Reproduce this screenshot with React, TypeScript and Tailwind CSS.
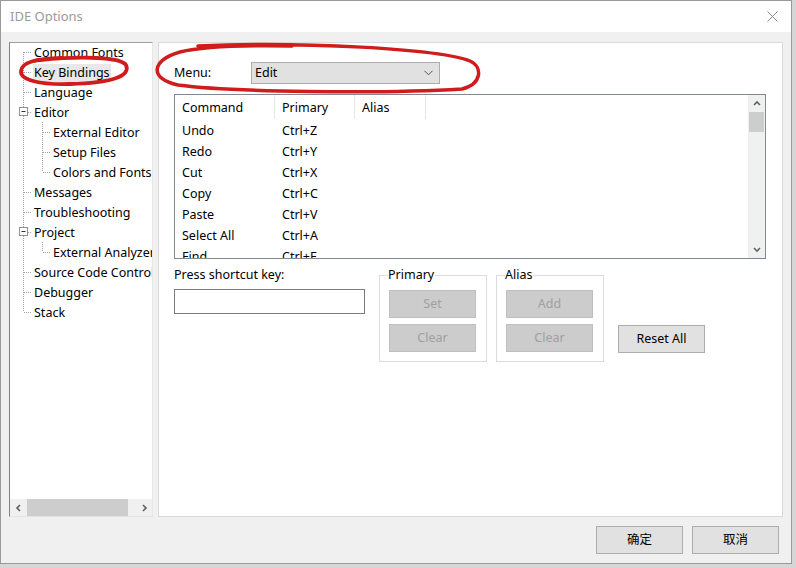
import React from "react";

const FONT = { fontFamily: '"Noto Sans", "Noto Sans CJK SC", sans-serif' };

type Node = { label: string; level: 0 | 1; box?: boolean; selected?: boolean };

const TREE: Node[] = [
  { label: "Common Fonts", level: 0 },
  { label: "Key Bindings", level: 0, selected: true },
  { label: "Language", level: 0 },
  { label: "Editor", level: 0, box: true },
  { label: "External Editor", level: 1 },
  { label: "Setup Files", level: 1 },
  { label: "Colors and Fonts", level: 1 },
  { label: "Messages", level: 0 },
  { label: "Troubleshooting", level: 0 },
  { label: "Project", level: 0, box: true },
  { label: "External Analyzer", level: 1 },
  { label: "Source Code Control", level: 0 },
  { label: "Debugger", level: 0 },
  { label: "Stack", level: 0 },
];

const BINDINGS = [
  ["Undo", "Ctrl+Z"],
  ["Redo", "Ctrl+Y"],
  ["Cut", "Ctrl+X"],
  ["Copy", "Ctrl+C"],
  ["Paste", "Ctrl+V"],
  ["Select All", "Ctrl+A"],
  ["Find", "Ctrl+F"],
];

export default function App() {
  return (
    <div className="relative h-[568px] w-[796px] overflow-hidden bg-[#d6d6d6] text-[12.5px] text-black" style={FONT}>
      <div className="flex h-[564px] w-[792px] flex-col border border-[#9a9a9a] bg-[#f0f0f0]">
        {/* title bar */}
        <div className="flex h-[31px] items-center justify-between bg-white pl-[9px] pr-[13px]">
          <span className="text-[13px] text-[#9a9a9a]">IDE Options</span>
          <svg width="11" height="11" viewBox="0 0 11 11">
            <path d="M0.5 0.5 L10.5 10.5 M10.5 0.5 L0.5 10.5" stroke="#8a8a8a" strokeWidth="1" />
          </svg>
        </div>

        {/* body */}
        <div className="flex gap-[5px] pl-[8px] pt-[10px]">
          <TreePanel />
          <KeysPanel />
        </div>

        {/* footer */}
        <div className="flex justify-end gap-[9px] pr-[12px] pt-[9px]">
          <WinButton className="w-[87px]">确定</WinButton>
          <WinButton className="w-[87px]">取消</WinButton>
        </div>
      </div>

      {/* red marker loops */}
      <svg className="pointer-events-none absolute left-0 top-0" width="796" height="568">
        <path
          d="M198 46 C300 41, 440 49, 470 61 C483 67, 482 84, 462 89 C380 94, 230 92, 178 85 C149 79, 151 60, 180 52 C200 47, 240 45, 292 46"
          fill="none"
          stroke="#d01c1c"
          strokeWidth="3.5"
          strokeLinecap="round"
        />
        <path
          d="M40 60 C82 56, 121 57, 126 65 C131 76, 112 83, 70 84 C40 85, 20 80, 21 71 C22 62, 35 59, 62 58"
          fill="none"
          stroke="#d01c1c"
          strokeWidth="3.8"
          strokeLinecap="round"
        />
      </svg>
    </div>
  );
}

function TreePanel() {
  return (
    <div className="flex h-[475px] w-[144px] flex-col border border-b-[#e6e6e6] border-l-[#828282] border-r-[#e6e6e6] border-t-[#a0a0a0] bg-white">
      <div className="relative flex-1 overflow-hidden">
        {/* connector lines */}
        <svg className="absolute left-0 top-0" width="142" height="300">
          <g stroke="#a0a0a0" strokeDasharray="1 1" strokeWidth="1">
            <path d="M13.5 9 V269" />
            {[9, 29, 49, 149, 169, 229, 249, 269].map((y) => (
              <path key={y} d={`M14 ${y + 0.5} H21`} />
            ))}
            <path d="M18 69.5 H21 M18 189.5 H21" />
            <path d="M32.5 79 V129 M32.5 199 V209" />
            {[89, 109, 129, 209].map((y) => (
              <path key={y} d={`M33 ${y + 0.5} H40`} />
            ))}
          </g>
          {[69, 189].map((y) => (
            <g key={y}>
              <rect x="9.5" y={y - 4.5} width="8" height="8" fill="white" stroke="#919191" />
              <path d={`M11.5 ${y - 0.5} H15.5`} stroke="#333" />
            </g>
          ))}
        </svg>
        <div className="relative">
          {TREE.map((n) => (
            <div
              key={n.label}
              className={`flex h-[20px] items-center whitespace-nowrap ${n.level === 0 ? "pl-[23px]" : "pl-[42px]"}`}
            >
              <span className={`px-[1px] leading-[18px] ${n.selected ? "bg-[#e8e8e8]" : ""}`}>{n.label}</span>
            </div>
          ))}
        </div>
      </div>
      {/* horizontal scrollbar */}
      <div className="flex h-[17px] items-center bg-[#f0f0f0]">
        <div className="flex w-[17px] justify-center">
          <Chevron dir="left" />
        </div>
        <div className="h-full w-[101px] bg-[#cdcdcd]" />
        <div className="flex-1" />
        <div className="flex w-[17px] justify-center">
          <Chevron dir="right" />
        </div>
      </div>
    </div>
  );
}

function KeysPanel() {
  return (
    <div className="h-[475px] w-[625px] border border-[#dadada] bg-white pl-[15px] pt-[19px]">
      {/* menu row */}
      <div className="flex h-[22px] items-center">
        <span className="w-[77px] pt-[1px]">Menu:</span>
        <div className="flex h-[22px] w-[189px] items-center justify-between border border-[#adadad] bg-[#e1e1e1] pl-[3px] pr-[6px]">
          <span className="pt-[1px]">Edit</span>
          <svg width="9" height="6" viewBox="0 0 9 6">
            <path d="M0.5 0.8 L4.5 4.8 L8.5 0.8" fill="none" stroke="#555" />
          </svg>
        </div>
      </div>

      {/* list view */}
      <div className="mt-[10px] flex h-[165px] w-[592px] border border-[#828790] bg-white">
        <div className="flex-1 overflow-hidden">
          <div className="flex h-[24px] items-start">
            <div className="h-full w-[100px] border-r border-[#e5e5e5] pl-[7px] pt-[2px] leading-[22px]">Command</div>
            <div className="h-full w-[80px] border-r border-[#e5e5e5] pl-[7px] pt-[2px] leading-[22px]">Primary</div>
            <div className="h-full w-[71px] border-r border-[#e5e5e5] pl-[7px] pt-[2px] leading-[22px]">Alias</div>
          </div>
          {BINDINGS.map(([cmd, key]) => (
            <div key={cmd} className="flex h-[21px] items-center pt-[4px]">
              <div className="w-[100px] pl-[7px]">{cmd}</div>
              <div className="w-[80px] pl-[7px]">{key}</div>
            </div>
          ))}
        </div>
        {/* vertical scrollbar */}
        <div className="flex w-[17px] flex-col bg-[#f0f0f0]">
          <div className="flex h-[17px] items-center justify-center">
            <Chevron dir="up" />
          </div>
          <div className="mx-[1px] h-[20px] bg-[#cdcdcd]" />
          <div className="flex-1" />
          <div className="flex h-[17px] items-center justify-center">
            <Chevron dir="down" />
          </div>
        </div>
      </div>

      {/* shortcut editor */}
      <div className="flex items-start">
        <div className="mt-[6px] w-[191px]">
          <div className="leading-[20px]">Press shortcut key:</div>
          <div className="mt-[4px] h-[25px] border border-[#7a7a7a] bg-white" />
        </div>
        <GroupBox title="Primary" className="ml-[14px]">
          <WinButton disabled>Set</WinButton>
          <WinButton disabled>Clear</WinButton>
        </GroupBox>
        <GroupBox title="Alias" className="ml-[9px]">
          <WinButton disabled>Add</WinButton>
          <WinButton disabled>Clear</WinButton>
        </GroupBox>
        <div className="ml-[14px] mt-[66px]">
          <WinButton className="w-[87px]">Reset All</WinButton>
        </div>
      </div>
    </div>
  );
}

function GroupBox({ title, className, children }: { title: string; className?: string; children: React.ReactNode }) {
  return (
    <fieldset className={`mt-[7px] flex w-[108px] flex-col gap-[6px] border border-[#dcdcdc] pb-[9px] pl-[9px] ${className ?? ""}`}>
      <legend className="ml-[-1px] pr-[1px] leading-[18px]">{title}</legend>
      <div className="mt-[6px] flex flex-col gap-[6px]">{children}</div>
    </fieldset>
  );
}

function WinButton({
  children,
  disabled,
  className,
}: {
  children: React.ReactNode;
  disabled?: boolean;
  className?: string;
}) {
  return (
    <button
      className={`flex h-[28px] items-center justify-center border ${
        disabled ? "w-[87px] border-[#bfbfbf] bg-[#cccccc] text-[#a0a0a0]" : "border-[#adadad] bg-[#e1e1e1] text-black"
      } ${className ?? ""}`}
    >
      {children}
    </button>
  );
}

function Chevron({ dir }: { dir: "up" | "down" | "left" | "right" }) {
  const d = {
    up: "M1 5 L4 2 L7 5",
    down: "M1 2 L4 5 L7 2",
    left: "M5 1 L2 4 L5 7",
    right: "M3 1 L6 4 L3 7",
  }[dir];
  return (
    <svg width="8" height="8" viewBox="0 0 8 8">
      <path d={d} fill="none" stroke="#606060" strokeWidth="1.6" />
    </svg>
  );
}
